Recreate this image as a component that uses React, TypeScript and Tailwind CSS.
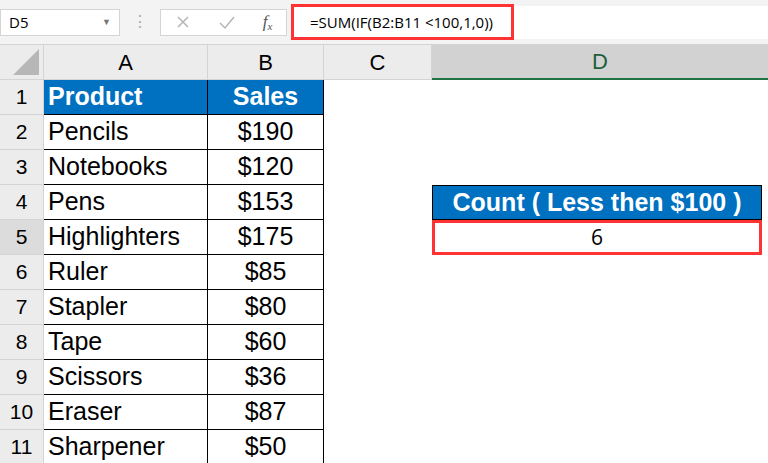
const data = [
  ["Pencils", "$190"], ["Notebooks", "$120"], ["Pens", "$153"], ["Highlighters", "$175"],
  ["Ruler", "$85"], ["Stapler", "$80"], ["Tape", "$60"], ["Scissors", "$36"],
  ["Eraser", "$87"], ["Sharpener", "$50"],
];

const font = { fontFamily: '"Liberation Sans", Arial, sans-serif' };

export default function App() {
  const rows = [];
  for (let r = 1; r <= 11; r++) {
    const d = data[r - 2];
    const sel = r === 5;
    rows.push(
      <div key={r} className="contents">
        <div className={`h-[35px] border-b border-r border-[#d4d4d4] flex items-center justify-center text-[21px] ${sel ? "bg-[#dcdcdc] text-black" : "bg-[#ececec] text-black"}`}>{r}</div>
        {r === 1 ? (
          <>
            <div className="h-[35px] bg-[#0070c0] border-r border-b border-black flex items-center px-1 text-[25px] font-bold text-white">Product</div>
            <div className="h-[35px] bg-[#0070c0] border-r border-b border-black flex items-center justify-center text-[25px] font-bold text-white">Sales</div>
          </>
        ) : (
          <>
            <div className="h-[35px] border-r border-b border-black flex items-center px-1 text-[25px]">{d[0]}</div>
            <div className="h-[35px] border-r border-b border-black flex items-center justify-center text-[25px]">{d[1]}</div>
          </>
        )}
        <div className="h-[35px]" />
        {r === 4 ? (
          <div className="h-[35px] pr-[6px]">
            <div className="h-full bg-[#0070c0] border border-black flex items-center justify-center text-[25px] font-bold text-white">Count ( Less then $100 )</div>
          </div>
        ) : r === 5 ? (
          <div className="h-[35px] pr-[6px]">
            <div className="h-full border-[3px] border-[#ff3333] flex items-center justify-center text-[21px] text-black" style={{ fontFamily: '"Open Sans", sans-serif' }}>6</div>
          </div>
        ) : (
          <div className="h-[35px]" />
        )}
      </div>
    );
  }

  return (
    <div className="w-[768px] h-[463px] overflow-hidden bg-white" style={font}>
      <div className="h-[45px] bg-[#f3f3f3] flex items-center gap-1 border-b border-[#d4d4d4]">
        <div className="w-[120px] h-[27px] bg-white border border-[#d4d4d4] flex items-center justify-between px-2 text-[15px]" style={{ fontFamily: '"Open Sans", sans-serif' }}>
          <span>D5</span>
          <span className="text-[9px] text-[#777]">▼</span>
        </div>
        <div className="text-[#aaa] text-[16px] px-2">⋮</div>
        <div className="w-[127px] h-[27px] bg-white border border-[#d4d4d4] flex items-center justify-around text-[#aaa]">
          <svg width="16" height="16" viewBox="0 0 16 16"><path d="M3 3l10 10M13 3L3 13" stroke="#b5b5b5" strokeWidth="1.5" /></svg>
          <svg width="18" height="16" viewBox="0 0 18 16"><path d="M2 9l5 5L16 3" stroke="#b5b5b5" strokeWidth="1.5" fill="none" /></svg>
          <span className="italic text-[#555] text-[17px]" style={{ fontFamily: '"Liberation Serif", serif' }}>f<sub className="text-[11px]">x</sub></span>
        </div>
        <div className="flex-1 h-[33px] bg-white flex items-center">
          <div className="w-[223px] h-[36px] border-[3px] border-[#ff3333] flex items-center pl-4 text-[15px]" style={{ fontFamily: '"Open Sans", sans-serif' }}>=SUM(IF(B2:B11 &lt;100,1,0))</div>
        </div>
      </div>
      <div className="grid grid-cols-[44px_164px_116px_108px_1fr]">
        <div className="h-[35px] bg-[#ececec] border-r border-b border-[#d4d4d4] flex items-end justify-end p-1">
          <div className="w-0 h-0 border-l-[26px] border-l-transparent border-b-[26px] border-b-[#b7b7b7]" />
        </div>
        <div className="h-[35px] bg-[#ececec] border-r border-b border-[#d4d4d4] flex items-center justify-center text-[22px]">A</div>
        <div className="h-[35px] bg-[#ececec] border-r border-b border-[#d4d4d4] flex items-center justify-center text-[22px]">B</div>
        <div className="h-[35px] bg-[#ececec] border-r border-b border-[#d4d4d4] flex items-center justify-center text-[22px]">C</div>
        <div className="h-[35px] bg-[#d2d2d2] border-b-2 border-[#217346] flex items-center justify-center text-[22px] text-[#1e5f3a]">D</div>
        {rows}
      </div>
    </div>
  );
}
